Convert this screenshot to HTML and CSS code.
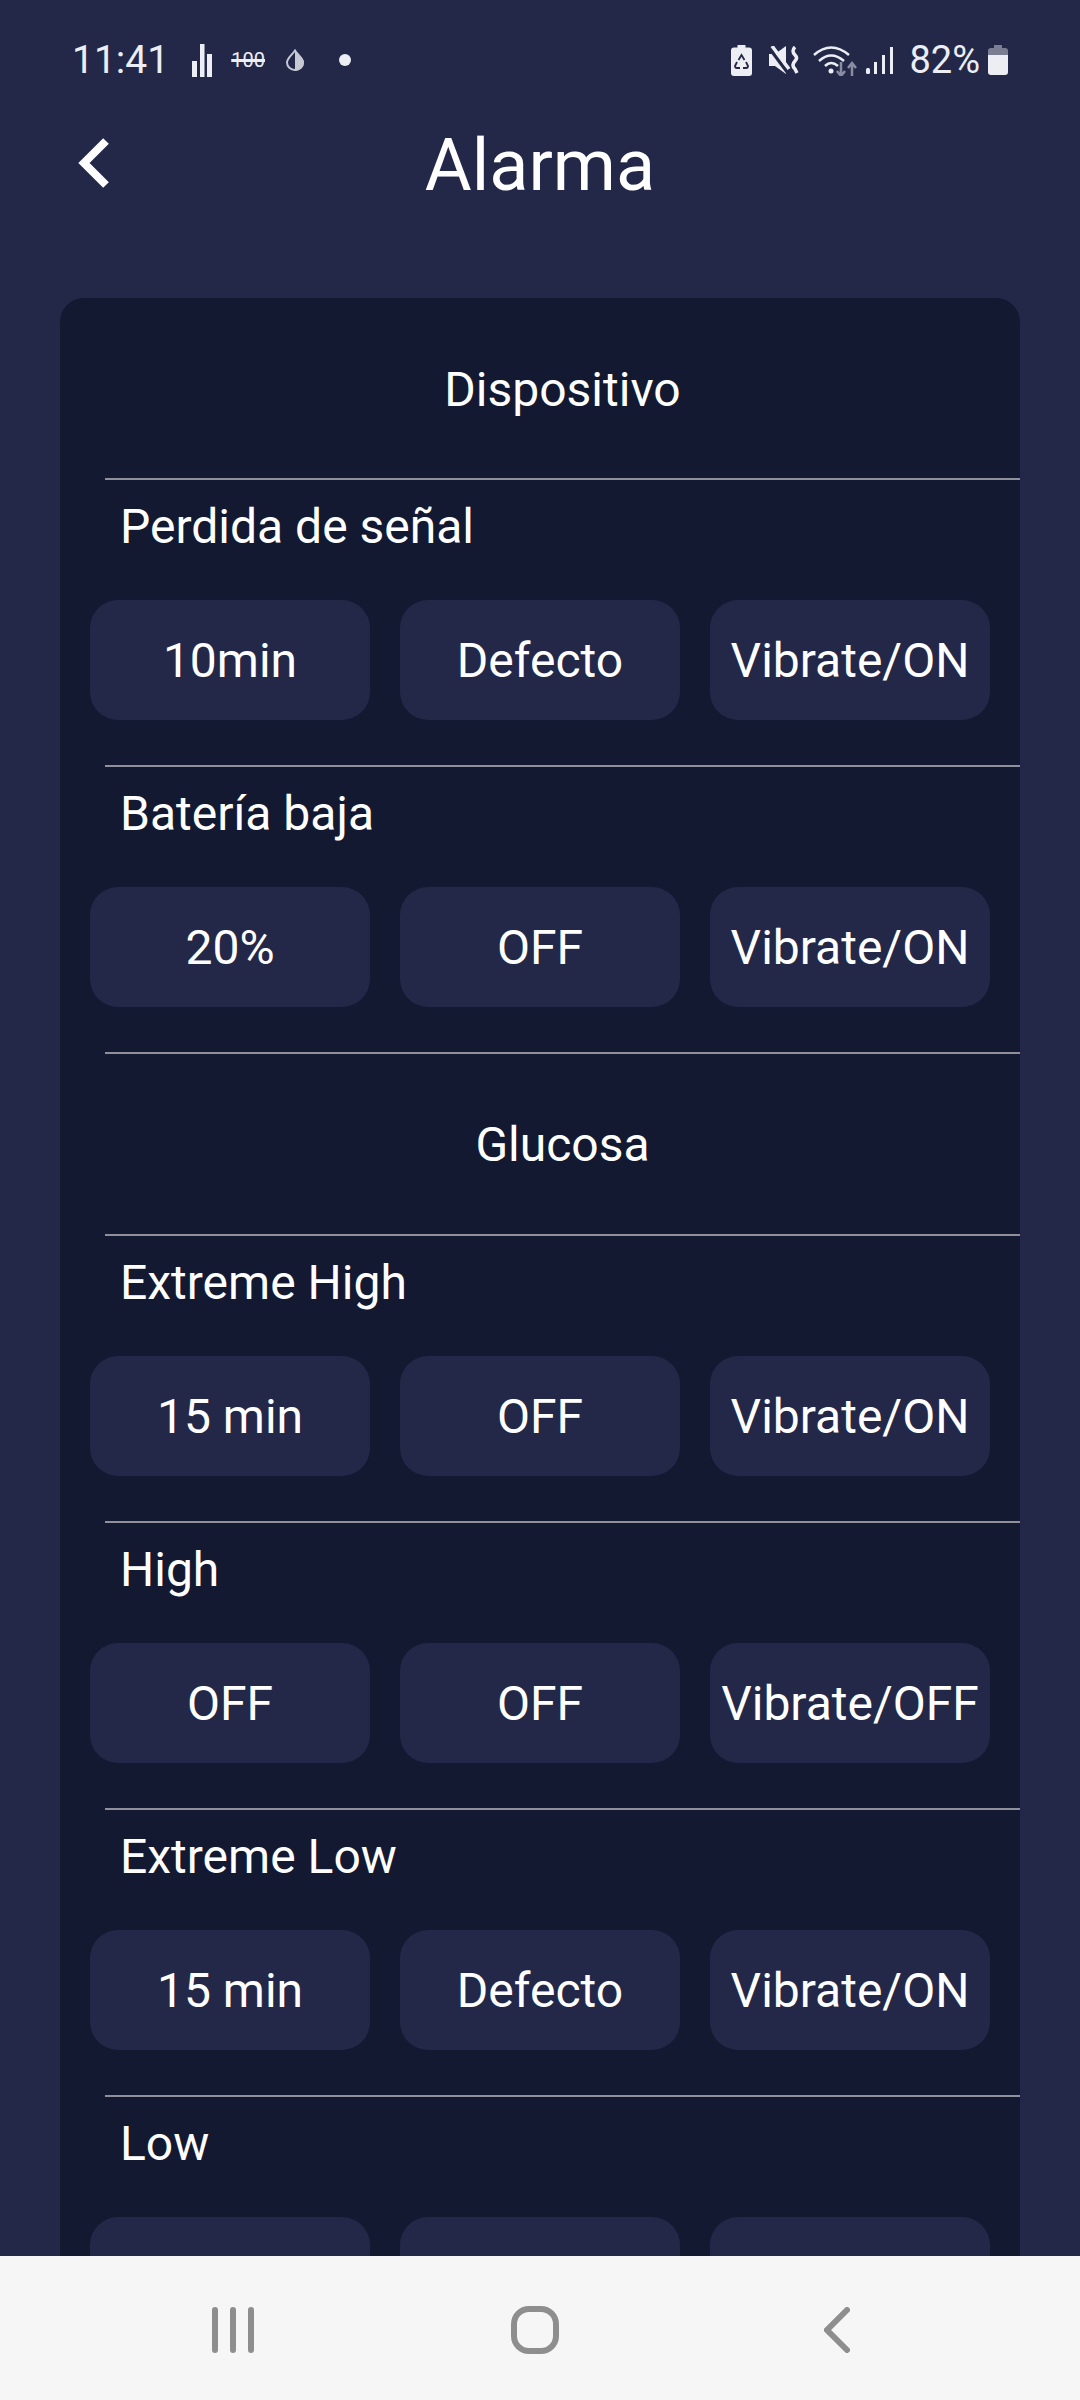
FILE: index.html
```html
<!DOCTYPE html>
<html lang="es">
<head>
    <meta charset="UTF-8">
    <meta name="viewport" content="width=device-width, initial-scale=1.0">
    <title>Alarma</title>
    <link rel="stylesheet" href="styles.css">
</head>
<body>
    <div class="screen">
        <div class="app">
            <div class="status-bar">
                <div class="status-left">
                    <span class="clock">11:41</span>
                    <svg class="ic-bars" width="20" height="33" viewBox="0 0 20 33" fill="#eceef4"><rect x="0" y="17" width="5" height="16"/><rect x="8" y="0" width="4.500" height="33"/><rect x="15" y="10" width="5" height="23"/></svg>
                    <span class="ic-hundred">100</span>
                    <svg class="ic-drop" width="18" height="22" viewBox="0 0 18 22"><path d="M9 1.500 C6.500 5.500 1 9 1 13.500 A8 7.500 0 0 0 17 13.500 C17 9 11.500 5.500 9 1.500 Z" fill="none" stroke="#c6c8d2" stroke-width="2"/><path d="M9 2 C11.500 5.500 18 9 18 13.500 A9 8.500 0 0 1 9 22 Z" fill="#c6c8d2"/></svg>
                    <span class="dot"></span>
                </div>
                <div class="status-right">
                    <svg class="ic-saver" width="21" height="31" viewBox="0 0 21 31"><path d="M6.500 0 H14.500 V2.500 H18 Q21 2.500 21 5.500 V28 Q21 31 18 31 H3 Q0 31 0 28 V5.500 Q0 2.500 3 2.500 H6.500 Z" fill="#eceef4"/><g fill="none" stroke="#232849" stroke-width="1.800"><path d="M7.500 15 L10.500 10 L13.500 15"/><path d="M15 17 L17 21 Q17 23 15 23 H12"/><path d="M9 23 H6 Q4 23 4 21 L6 17"/></g></svg>
                    <svg class="ic-mute" width="30" height="28" viewBox="0 0 30 28"><path d="M0 8 H6 L17 0 V28 L6 20 H0 Z" fill="#eceef4"/><path d="M1 3 L19 27" stroke="#232849" stroke-width="3.500"/><path d="M3 0 L20 23" stroke="#eceef4" stroke-width="3.500"/><path d="M26 1 Q22 5 26 9 Q29 12 26 15 Q22 19 26 23 L28 27" fill="none" stroke="#eceef4" stroke-width="3.500"/></svg>
                    <svg class="ic-wifi" width="44" height="31" viewBox="0 0 44 31"><g fill="none" stroke="#eceef4" stroke-width="2.500"><path d="M1 10 Q18 -5 36 10"/><path d="M6 16 Q18 5 31 16"/><path d="M12 21 Q18 15 25 21"/></g><circle cx="18" cy="26" r="2.500" fill="#eceef4"/><path d="M28 17 V30 M24 26 L28 31 L32 26" fill="none" stroke="#8a8da0" stroke-width="2.500"/><path d="M39 31 V19 M35 23 L39 18 L43 23" fill="none" stroke="#8a8da0" stroke-width="2.500"/></svg>
                    <svg class="ic-signal" width="27" height="27" viewBox="0 0 27 27" fill="#eceef4"><rect x="0" y="21" width="4" height="6" rx="1.500"/><rect x="8" y="15" width="3" height="12"/><rect x="16" y="8" width="3" height="19"/><rect x="24" y="0" width="3" height="27"/></svg>
                    <span class="pct">82%</span>
                    <svg class="ic-battery" width="20" height="30" viewBox="0 0 20 30"><path d="M6 0 H14 V3 H17 Q20 3 20 6 V10 H0 V6 Q0 3 3 3 H6 Z" fill="#7b7e92"/><path d="M0 10 H20 V27 Q20 30 17 30 H3 Q0 30 0 27 Z" fill="#eceef4"/></svg>
                </div>
            </div>

            <div class="app-header">
                <svg class="back" width="36" height="52" viewBox="0 0 36 52"><path d="M30 4 L8 26 L30 48" fill="none" stroke="#fff" stroke-width="8"/></svg>
                <h1>Alarma</h1>
            </div>

            <div class="card">
                <div class="section-title">Dispositivo</div>

                <div class="row">
                    <div class="row-label">Perdida de señal</div>
                    <div class="chips">
                        <div class="chip">10min</div>
                        <div class="chip">Defecto</div>
                        <div class="chip">Vibrate/ON</div>
                    </div>
                </div>
                <div class="row">
                    <div class="row-label">Batería baja</div>
                    <div class="chips">
                        <div class="chip">20%</div>
                        <div class="chip">OFF</div>
                        <div class="chip">Vibrate/ON</div>
                    </div>
                </div>

                <div class="section-title ruled">Glucosa</div>

                <div class="row">
                    <div class="row-label">Extreme High</div>
                    <div class="chips">
                        <div class="chip">15 min</div>
                        <div class="chip">OFF</div>
                        <div class="chip">Vibrate/ON</div>
                    </div>
                </div>
                <div class="row">
                    <div class="row-label">High</div>
                    <div class="chips">
                        <div class="chip">OFF</div>
                        <div class="chip">OFF</div>
                        <div class="chip">Vibrate/OFF</div>
                    </div>
                </div>
                <div class="row">
                    <div class="row-label">Extreme Low</div>
                    <div class="chips">
                        <div class="chip">15 min</div>
                        <div class="chip">Defecto</div>
                        <div class="chip">Vibrate/ON</div>
                    </div>
                </div>
                <div class="row">
                    <div class="row-label">Low</div>
                    <div class="chips">
                        <div class="chip"></div>
                        <div class="chip"></div>
                        <div class="chip"></div>
                    </div>
                </div>
            </div>
        </div>

        <div class="nav-bar">
            <svg class="nav-recent" width="42" height="46" viewBox="0 0 42 46" fill="#8e8e8e"><rect x="0" y="0" width="6" height="46" rx="3"/><rect x="18" y="0" width="6" height="46" rx="3"/><rect x="36" y="0" width="6" height="46" rx="3"/></svg>
            <svg class="nav-home" width="48" height="48" viewBox="0 0 48 48"><rect x="3" y="3" width="42" height="42" rx="15" fill="none" stroke="#8e8e8e" stroke-width="6"/></svg>
            <svg class="nav-back" width="26" height="46" viewBox="0 0 26 46"><path d="M23 3 L3 23 L23 43" fill="none" stroke="#8e8e8e" stroke-width="6" stroke-linecap="round"/></svg>
        </div>
    </div>
</body>
</html>
```

FILE: styles.css
```css
html, body {
    margin: 0;
    padding: 0;
}
body {
    font-family: 'Roboto', sans-serif;
    background: #232849;
    color: #fff;
}
.screen {
    width: 1080px;
    height: 2400px;
    display: flex;
    flex-direction: column;
    overflow: hidden;
}
.app {
    height: 2256px;
    overflow: hidden;
    background: #232849;
}
.status-bar {
    height: 88px;
    padding: 32px 72px 0 72px;
    box-sizing: border-box;
    display: flex;
    justify-content: space-between;
    align-items: center;
}
.status-left, .status-right {
    display: flex;
    align-items: center;
}
.clock, .pct {
    font-size: 38px;
    color: #eceef4;
}
.clock {
    font-size: 39px;
}
.ic-bars { margin-left: 23px; }
.ic-hundred {
    margin-left: 19px;
    font-size: 20px;
    width: 34px;
    color: #eceef4;
    text-align: center;
    text-decoration: line-through;
    text-decoration-thickness: 3px;
}
.ic-drop { margin-left: 21px; }
.dot {
    width: 12px;
    height: 12px;
    margin-left: 35px;
    border-radius: 50%;
    background: #eceef4;
}
.ic-mute { margin-left: 17px; }
.ic-wifi { margin-left: 14px; }
.ic-signal { margin-left: 9px; }
.pct { margin-left: 16px; }
.ic-battery { margin-left: 8px; }
.app-header {
    position: relative;
    height: 210px;
    padding-top: 36px;
    box-sizing: border-box;
}
.back {
    position: absolute;
    left: 76px;
    top: 49px;
}
h1 {
    margin: 0;
    font-size: 72px;
    font-weight: 400;
    line-height: 84px;
    text-align: center;
}
.card {
    margin: 0 60px;
    background: #141932;
    border-radius: 24px 24px 0 0;
    padding-bottom: 40px;
}
.section-title {
    height: 180px;
    font-size: 48px;
    line-height: 184px;
    text-align: center;
    padding-left: 45px;
    box-sizing: border-box;
}
.section-title.ruled {
    height: 182px;
    margin-left: 45px;
    padding-left: 0;
    line-height: 182px;
    border-top: 2px solid #8f909b;
}
.row {
    height: 287px;
    margin-left: 45px;
    border-top: 2px solid #8f909b;
    box-sizing: border-box;
}
.row-label {
    font-size: 48px;
    padding: 23px 0 0 15px;
    line-height: 48px;
    height: 97px;
}
.chips {
    display: flex;
    gap: 30px;
    margin-left: -15px;
    margin-right: 30px;
}
.chip {
    width: 280px;
    height: 120px;
    background: #232849;
    border-radius: 28px;
    display: flex;
    align-items: center;
    justify-content: center;
    font-size: 48px;
    white-space: nowrap;
}
.nav-bar {
    height: 144px;
    padding-top: 3px;
    box-sizing: border-box;
    background: #f6f6f6;
    display: flex;
    align-items: center;
    padding-left: 212px;
}
.nav-home { margin-left: 257px; }
.nav-back { margin-left: 265px; }
```
